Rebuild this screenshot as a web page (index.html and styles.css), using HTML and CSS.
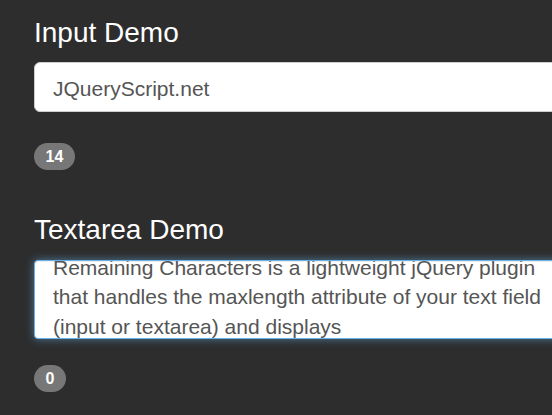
FILE: index.html
```html
<!DOCTYPE html>
<html lang="en">
<head>
<meta charset="utf-8">
<title>Remaining Characters Demo</title>
<link rel="stylesheet" href="styles.css">
</head>
<body>
<main class="demo">
  <section class="block block-input">
    <h3 class="title">Input Demo</h3>
    <input class="field field-input" type="text" value="JQueryScript.net" maxlength="30">
    <div class="count"><span class="badge">14</span></div>
  </section>
  <section class="block block-textarea">
    <h3 class="title">Textarea Demo</h3>
    <textarea id="ta" class="field field-textarea" maxlength="138">Remaining Characters is a lightweight jQuery plugin that handles the maxlength attribute of your text field (input or textarea) and displays</textarea>
    <div class="count"><span class="badge">0</span></div>
  </section>
</main>
<script src="script.js"></script>
</body>
</html>
```

FILE: styles.css
```css
html, body {
  margin: 0;
  padding: 0;
  background: #2d2d2d;
  overflow: hidden;
}

.demo {
  padding-left: 34px;
  font-family: "Liberation Sans", Arial, sans-serif;
}

.block {
  display: flex;
  flex-direction: column;
  align-items: flex-start;
}

.title {
  margin: 16.5px 0 14.5px;
  font-size: 28px;
  line-height: 31px;
  font-weight: 400;
  color: #ffffff;
}

.block-textarea .title {
  margin-top: 44px;
  margin-bottom: 15px;
}

.field {
  box-sizing: border-box;
  width: 545px;
  margin: 0;
  font-family: "Liberation Sans", Arial, sans-serif;
  font-size: 21px;
  color: #555555;
  background: #ffffff;
  border: 1px solid #cccccc;
  outline: none;
}

.field-input {
  height: 50px;
  padding: 4px 18px 0;
  border-radius: 6px;
}

.field-textarea {
  display: block;
  height: 79px;
  padding: 10px 18px;
  line-height: 29.4px;
  border-radius: 4px;
  border-color: #66afe9;
  box-shadow: inset 0 1px 1px rgba(0, 0, 0, 0.075), 0 0 8px rgba(102, 175, 233, 0.6);
  resize: none;
  overflow: hidden;
}

.count {
  margin-top: 31px;
}

.block-textarea .count {
  margin-top: 26px;
}

.badge {
  display: inline-block;
  padding: 5px 11.5px;
  font-size: 16px;
  line-height: 17px;
  font-weight: 700;
  color: #ffffff;
  background: #777777;
  border-radius: 14px;
}
```

FILE: script.js
```js
document.getElementById('ta').scrollTop = 18;
```
